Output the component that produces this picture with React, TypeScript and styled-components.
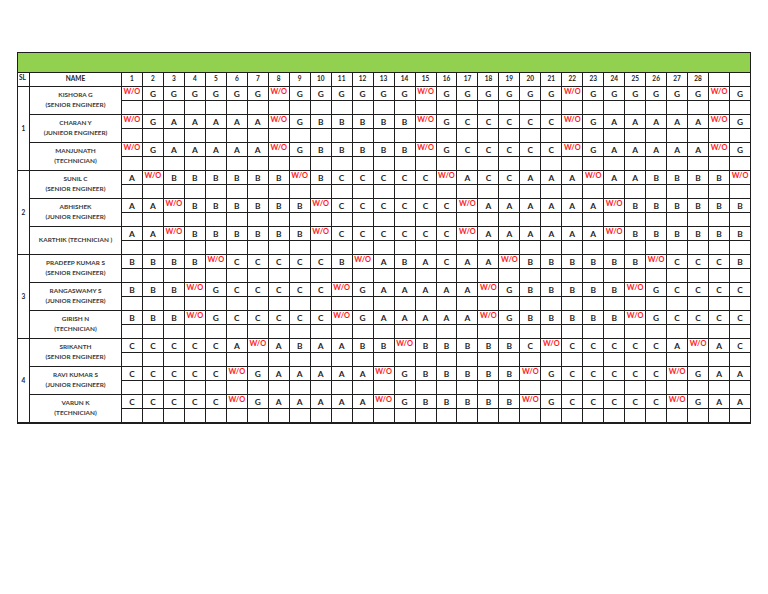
import React from "react";
import styled, { createGlobalStyle } from "styled-components";

const GlobalStyle = createGlobalStyle`
  html, body {
    margin: 0;
    padding: 0;
    background: #ffffff;
  }
  body {
    font-family: "Lato", "Open Sans", sans-serif;
  }
`;

const Page = styled.div`
  padding: 52px 0 0 17px;
`;

const Sheet = styled.div`
  box-sizing: border-box;
  width: 734px;
  display: grid;
  grid-template-columns: 11px 91px repeat(30, 1fr);
  grid-template-rows: 19px 13px repeat(24, 13px);
  gap: 1px;
  background: #1e1e1e;
  border: 1px solid #1e1e1e;
  border-bottom-width: 2px;
`;

const TitleBar = styled.div`
  grid-column: 1 / -1;
  background: #92d050;
`;

const Cell = styled.div`
  background: #ffffff;
  overflow: hidden;
`;

const HeadCell = styled(Cell)<{ $left?: boolean }>`
  display: flex;
  justify-content: ${(p) => (p.$left ? "flex-start" : "center")};
  padding: ${(p) => (p.$left ? "1px 0 0 1px" : "2px 0 0")};
  font-size: 6.5px;
  line-height: 8px;
  font-weight: 700;
  color: #222;
`;

const SlCell = styled(Cell)`
  grid-row: span 6;
  display: flex;
  align-items: center;
  justify-content: center;
  font-size: 6.5px;
  font-weight: 700;
  color: #222;
`;

const NameCell = styled(Cell)`
  grid-row: span 2;
  display: flex;
  flex-direction: column;
  align-items: center;
  justify-content: center;
  padding-bottom: 2px;
  box-sizing: border-box;
  font-size: 6.4px;
  line-height: 9.5px;
  font-weight: 700;
  color: #3a3a3a;
  white-space: nowrap;
`;

const MarkCell = styled(Cell)<{ $off?: boolean }>`
  display: flex;
  justify-content: center;
  align-items: flex-start;
  padding-top: ${(p) => (p.$off ? "1px" : "3px")};
  box-sizing: border-box;
  font-size: ${(p) => (p.$off ? "7.4px" : "8.4px")};
  line-height: ${(p) => (p.$off ? "8px" : "9px")};
  font-weight: 700;
  color: ${(p) => (p.$off ? "#ff1a1a" : "#262626")};
  white-space: nowrap;
`;

type Person = { name: string; role?: string; marks: string };

const groups: { sl: number; people: Person[] }[] = [
  {
    sl: 1,
    people: [
      { name: "KISHORA G", role: "(SENIOR ENGINEER)", marks: "W G G G G G G W G G G G G G W G G G G G G W G G G G G G W G" },
      { name: "CHARAN Y", role: "(JUNIEOR ENGINEER)", marks: "W G A A A A A W G B B B B B W G C C C C C W G A A A A A W G" },
      { name: "MANJUNATH", role: "(TECHNICIAN)", marks: "W G A A A A A W G B B B B B W G C C C C C W G A A A A A W G" },
    ],
  },
  {
    sl: 2,
    people: [
      { name: "SUNIL C", role: "(SENIOR ENGINEER)", marks: "A W B B B B B B W B C C C C C W A C C A A A W A A B B B B W" },
      { name: "ABHISHEK", role: "(JUNIOR ENGINEER)", marks: "A A W B B B B B B W C C C C C C W A A A A A A W B B B B B B" },
      { name: "KARTHIK (TECHNICIAN )", marks: "A A W B B B B B B W C C C C C C W A A A A A A W B B B B B B" },
    ],
  },
  {
    sl: 3,
    people: [
      { name: "PRADEEP KUMAR S", role: "(SENIOR ENGINEER)", marks: "B B B B W C C C C C B W A B A C A A W B B B B B B W C C C B" },
      { name: "RANGASWAMY S", role: "(JUNIOR ENGINEER)", marks: "B B B W G C C C C C W G A A A A A W G B B B B B W G C C C C" },
      { name: "GIRISH N", role: "(TECHNICIAN)", marks: "B B B W G C C C C C W G A A A A A W G B B B B B W G C C C C" },
    ],
  },
  {
    sl: 4,
    people: [
      { name: "SRIKANTH", role: "(SENIOR ENGINEER)", marks: "C C C C C A W A B A A B B W B B B B B C W C C C C C A W A C" },
      { name: "RAVI KUMAR S", role: "(JUNIOR ENGINEER)", marks: "C C C C C W G A A A A A W G B B B B B W G C C C C C W G A A" },
      { name: "VARUN K", role: "(TECHNICIAN)", marks: "C C C C C W G A A A A A W G B B B B B W G C C C C C W G A A" },
    ],
  },
];

const dayLabels = Array.from({ length: 30 }, (_, i) => (i < 28 ? String(i + 1) : ""));

function App() {
  return (
    <Page>
      <GlobalStyle />
      <Sheet>
        <TitleBar />
        <HeadCell $left>SL</HeadCell>
        <HeadCell>NAME</HeadCell>
        {dayLabels.map((d, i) => (
          <HeadCell key={`h${i}`}>{d}</HeadCell>
        ))}
        {groups.map((g) => (
          <React.Fragment key={g.sl}>
            <SlCell>{g.sl}</SlCell>
            {g.people.map((p) => (
              <React.Fragment key={p.name}>
                <NameCell>
                  <span>{p.name}</span>
                  {p.role && <span>{p.role}</span>}
                </NameCell>
                {p.marks.split(" ").map((m, i) => (
                  <MarkCell key={`m${i}`} $off={m === "W"}>
                    {m === "W" ? "W/O" : m}
                  </MarkCell>
                ))}
                {dayLabels.map((_, i) => (
                  <MarkCell key={`e${i}`} />
                ))}
              </React.Fragment>
            ))}
          </React.Fragment>
        ))}
      </Sheet>
    </Page>
  );
}

export default App;
